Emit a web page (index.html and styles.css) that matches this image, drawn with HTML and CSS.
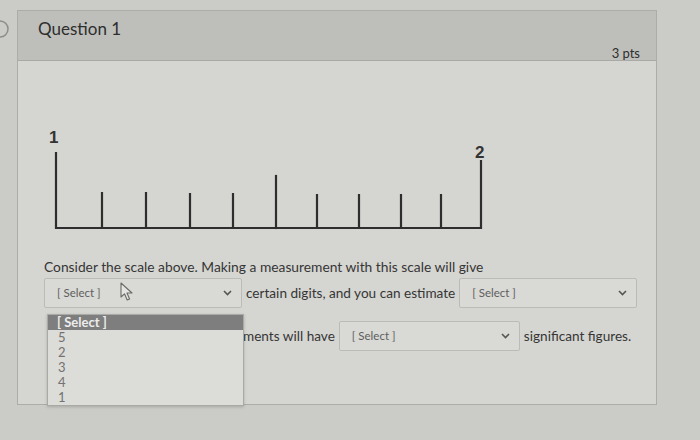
FILE: index.html
```html
<!DOCTYPE html>
<html>
<head>
<meta charset="utf-8">
<link rel="stylesheet" href="styles.css">
</head>
<body>
<div class="page">
  <svg class="side-circle" width="12" height="20" viewBox="0 0 12 20"><circle cx="0" cy="10" r="8" fill="none" stroke="#8d8d89" stroke-width="1.5"/></svg>
  <section class="card">
    <header class="card-head">
      <span class="q-title">Question 1</span>
      <span class="q-pts">3 pts</span>
    </header>
    <div class="card-body">
      <svg class="ruler" width="460" height="120" viewBox="0 0 460 120">
        <text x="5" y="22" class="ruler-label">1</text>
        <text x="431" y="37" class="ruler-label">2</text>
        <g stroke="#2e2e2e" stroke-width="2.2" fill="none" stroke-linecap="square">
          <path d="M12 32 V107 H437 V40"/>
          <path d="M58 72 V107 M102 72 V107 M146 73 V107 M189 73 V107 M273 74 V107 M315 74 V107 M357 74 V107 M397 74 V107"/>
          <path d="M232 55 V107"/>
        </g>
      </svg>
      <div class="row row-text">Consider the scale above. Making a measurement with this scale will give</div>
      <div class="row">
        <div class="select sel-a"><span>[ Select ]</span><svg class="chev" width="9" height="6" viewBox="0 0 9 6"><path d="M1 1 L4.5 4.5 L8 1" fill="none" stroke="#555" stroke-width="1.6"/></svg></div>
        <span>certain digits, and you can estimate</span>
        <div class="select sel-b"><span>[ Select ]</span><svg class="chev" width="9" height="6" viewBox="0 0 9 6"><path d="M1 1 L4.5 4.5 L8 1" fill="none" stroke="#555" stroke-width="1.6"/></svg></div>
      </div>
      <div class="row row-three">
        <span>ments will have</span>
        <div class="select sel-c"><span>[ Select ]</span><svg class="chev" width="9" height="6" viewBox="0 0 9 6"><path d="M1 1 L4.5 4.5 L8 1" fill="none" stroke="#555" stroke-width="1.6"/></svg></div>
        <span>significant figures.</span>
      </div>
      <svg class="cursor" width="18" height="20" viewBox="0 0 18 20"><path d="M2 1 L2 15 L5.5 11.8 L8.2 18 L10.6 17 L8 11 L13 11 Z" fill="#e4e4e0" stroke="#6a6a6a" stroke-width="1.1" stroke-linejoin="round"/></svg>
      <ul class="options">
        <li class="opt-active">[ Select ]</li>
        <li>5</li>
        <li>2</li>
        <li>3</li>
        <li>4</li>
        <li>1</li>
      </ul>
    </div>
  </section>
</div>
</body>
</html>
```
FILE: styles.css
```css
html, body {
  margin: 0;
  padding: 0;
}
body {
  width: 700px;
  height: 440px;
  overflow: hidden;
  background: #cbcbc7;
  font-family: Lato, "Open Sans", sans-serif;
  color: #363636;
}
.page {
  position: relative;
  width: 700px;
  height: 440px;
  padding: 10px 0 0 17px;
  box-sizing: border-box;
}
.side-circle {
  position: absolute;
  left: 0;
  top: 19px;
}
.card {
  width: 640px;
  height: 395px;
  box-sizing: border-box;
  border: 1px solid #acaca8;
  background: #d5d5d1;
  display: flex;
  flex-direction: column;
}
.card-head {
  height: 50px;
  box-sizing: border-box;
  background: #bebeba;
  border-bottom: 1px solid #a9a9a5;
  display: flex;
  justify-content: space-between;
  padding: 7px 16px 0 20px;
}
.q-title {
  font-size: 17px;
  line-height: 22px;
  color: #2e2e2e;
  align-self: flex-start;
}
.q-pts {
  font-size: 13px;
  line-height: 18px;
  color: #2e2e2e;
  align-self: flex-end;
  margin-bottom: -2px;
}
.card-body {
  position: relative;
  flex: 1;
  padding: 60px 0 0 26px;
}
.ruler {
  display: block;
}
.ruler-label {
  font-family: "Liberation Sans", sans-serif;
  font-size: 17px;
  font-weight: 700;
  fill: #333;
}
.row {
  display: flex;
  align-items: center;
  gap: 4px;
  font-size: 13.6px;
  white-space: nowrap;
}
.row-text {
  margin-top: 16px;
  line-height: 20px;
  font-size: 13.8px;
}
.row-text + .row {
  margin-top: 1px;
}
.row-three {
  margin-top: 13px;
  padding-left: 199px;
}
.select {
  height: 30px;
  box-sizing: border-box;
  border: 1px solid #bbbbb7;
  border-radius: 2px;
  background: #d9d9d5;
  display: flex;
  align-items: center;
  justify-content: space-between;
  padding: 0 9px 0 12px;
  font-size: 11.5px;
  color: #5e5e5e;
}
.select span {
  margin-top: -2px;
}
.sel-a { width: 198px; }
.sel-b { width: 178px; }
.sel-c { width: 181px; }
.cursor {
  position: absolute;
  left: 101px;
  top: 221px;
}
.options {
  position: absolute;
  left: 29px;
  top: 253px;
  width: 197px;
  height: 92px;
  margin: 0;
  padding: 0;
  list-style: none;
  box-sizing: border-box;
  background: #dcdcd8;
  border: 1px solid #a9a9a5;
  box-shadow: 0 1px 3px rgba(0,0,0,0.18);
  font-size: 13px;
  color: #727272;
}
.options li {
  height: 15px;
  line-height: 15px;
  padding-left: 10px;
}
.options li.opt-active {
  background: #7e7e7e;
  color: #ededed;
  font-weight: 700;
  padding-left: 9px;
}
```
